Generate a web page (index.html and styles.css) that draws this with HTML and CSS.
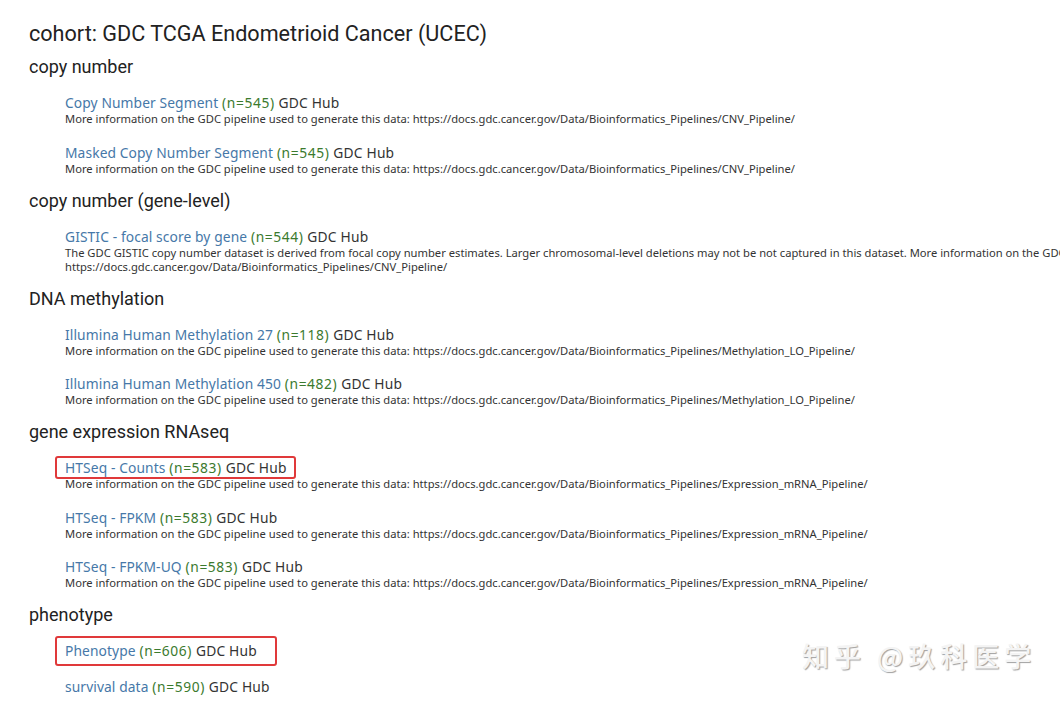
FILE: index.html
```html
<!DOCTYPE html>
<html lang="en">
<head>
    <meta charset="UTF-8">
    <title>GDC TCGA Endometrioid Cancer (UCEC)</title>
    <link rel="stylesheet" href="styles.css">
</head>
<body>
<div class="page">
    <h1 class="cohort">cohort: GDC TCGA Endometrioid Cancer (UCEC)</h1>

    <h2 class="type">copy number</h2>
    <ul class="datasets">
        <li>
            <p class="name"><a href="#">Copy Number Segment</a> <span class="count">(n=545)</span> GDC Hub</p>
            <p class="desc">More information on the GDC pipeline used to generate this data: https://docs.gdc.cancer.gov/Data/Bioinformatics_Pipelines/CNV_Pipeline/</p>
        </li>
        <li>
            <p class="name"><a href="#">Masked Copy Number Segment</a> <span class="count">(n=545)</span> GDC Hub</p>
            <p class="desc">More information on the GDC pipeline used to generate this data: https://docs.gdc.cancer.gov/Data/Bioinformatics_Pipelines/CNV_Pipeline/</p>
        </li>
    </ul>

    <h2 class="type">copy number (gene-level)</h2>
    <ul class="datasets">
        <li>
            <p class="name"><a href="#">GISTIC - focal score by gene</a> <span class="count">(n=544)</span> GDC Hub</p>
            <p class="desc wrap">The GDC GISTIC copy number dataset is derived from focal copy number estimates. Larger chromosomal-level deletions may not be not captured in this dataset. More information on the GDC<br>https://docs.gdc.cancer.gov/Data/Bioinformatics_Pipelines/CNV_Pipeline/</p>
        </li>
    </ul>

    <h2 class="type">DNA methylation</h2>
    <ul class="datasets">
        <li>
            <p class="name"><a href="#">Illumina Human Methylation 27</a> <span class="count">(n=118)</span> GDC Hub</p>
            <p class="desc">More information on the GDC pipeline used to generate this data: https://docs.gdc.cancer.gov/Data/Bioinformatics_Pipelines/Methylation_LO_Pipeline/</p>
        </li>
        <li>
            <p class="name"><a href="#">Illumina Human Methylation 450</a> <span class="count">(n=482)</span> GDC Hub</p>
            <p class="desc">More information on the GDC pipeline used to generate this data: https://docs.gdc.cancer.gov/Data/Bioinformatics_Pipelines/Methylation_LO_Pipeline/</p>
        </li>
    </ul>

    <h2 class="type">gene expression RNAseq</h2>
    <ul class="datasets">
        <li>
            <p class="name"><a href="#">HTSeq - Counts</a> <span class="count">(n=583)</span> GDC Hub</p>
            <p class="desc">More information on the GDC pipeline used to generate this data: https://docs.gdc.cancer.gov/Data/Bioinformatics_Pipelines/Expression_mRNA_Pipeline/</p>
            <span class="mark mark-counts"></span>
        </li>
        <li>
            <p class="name"><a href="#">HTSeq - FPKM</a> <span class="count">(n=583)</span> GDC Hub</p>
            <p class="desc">More information on the GDC pipeline used to generate this data: https://docs.gdc.cancer.gov/Data/Bioinformatics_Pipelines/Expression_mRNA_Pipeline/</p>
        </li>
        <li>
            <p class="name"><a href="#">HTSeq - FPKM-UQ</a> <span class="count">(n=583)</span> GDC Hub</p>
            <p class="desc">More information on the GDC pipeline used to generate this data: https://docs.gdc.cancer.gov/Data/Bioinformatics_Pipelines/Expression_mRNA_Pipeline/</p>
        </li>
    </ul>

    <h2 class="type">phenotype</h2>
    <ul class="datasets">
        <li>
            <p class="name"><a href="#">Phenotype</a> <span class="count">(n=606)</span> GDC Hub</p>
            <span class="mark mark-pheno"></span>
        </li>
        <li>
            <p class="name"><a href="#">survival data</a> <span class="count">(n=590)</span> GDC Hub</p>
        </li>
    </ul>
</div>
<div class="watermark">知乎 @玖科医学</div>
</body>
</html>
```

FILE: styles.css
```css
@charset "UTF-8";
/* reset */
body,h1,h2,p,ul,li{margin:0;padding:0}
ul{list-style:none}
a{text-decoration:none}

html,body{
    background:#fff;
    overflow:hidden;
}
body{
    font-family:"Noto Sans", "Open Sans", sans-serif;
    color:#333;
}
.page{
    padding:20px 0 0 29px;
}
.cohort{
    font:21.6px/28px Roboto, sans-serif;
    color:#222;
}
.type{
    font:18px/24px Roboto, sans-serif;
    color:#222;
    margin-top:7px;
}
.datasets{
    padding-left:36px;
    margin:15px 0 13px;
}
.datasets li{
    position:relative;
    margin-bottom:17.5px;
}
.datasets li:last-child{
    margin-bottom:0;
}
.name{
    font-size:13.8px;
    line-height:18px;
    color:#333;
    letter-spacing:0.2px;
}
.name a{
    color:#4678a8;
    letter-spacing:0.1px;
}
.count{
    color:#3b7a2e;
    letter-spacing:0.6px;
}
.desc{
    font-size:11.2px;
    line-height:14px;
    color:#333;
    white-space:nowrap;
}
.mark{
    position:absolute;
    border:2px solid #e0393a;
    border-radius:3px;
}
.mark-counts{
    left:-10px;
    top:-3px;
    width:237px;
    height:19px;
}
.mark-pheno{
    left:-10px;
    top:-6px;
    width:218px;
    height:26px;
}
.watermark{
    position:absolute;
    left:802px;
    top:638px;
    font:27px/36px "Noto Sans CJK SC", sans-serif;
    font-weight:500;
    color:#f4f4f4;
    text-shadow:1px 1px 1px #a0a0a0;
    letter-spacing:5px;
}
```
